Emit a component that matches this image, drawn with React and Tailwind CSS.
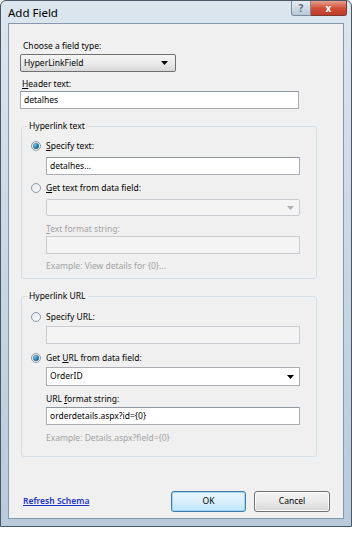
import React from "react";

const font = { fontFamily: '"Noto Sans", "Open Sans", sans-serif' };

function Arrow({ color = "#000" }) {
  return (
    <svg width="7" height="4" viewBox="0 0 7 4">
      <path d="M0 0 H7 L3.5 4 Z" fill={color} />
    </svg>
  );
}

function Radio({ checked }) {
  return (
    <span className="relative inline-flex h-[10px] w-[10px] items-center justify-center rounded-full border border-[#8c9aa8] bg-gradient-to-br from-[#e6e9ec] to-[#f8f9fa]">
      {checked && (
        <span className="h-[6px] w-[6px] rounded-full bg-[radial-gradient(circle_at_35%_35%,#7cc4ea,#1a6a9a_60%,#0d4468)]" />
      )}
    </span>
  );
}

function TextBox({ value, disabled, className = "" }) {
  return (
    <div
      className={
        "flex h-[18px] items-center px-[3px] text-[8.5px] " +
        (disabled
          ? "border border-[#c8ccd0] bg-[#f4f4f4] "
          : "border border-[#abadb3] border-t-[#8e959c] bg-white text-black ") +
        className
      }
    >
      {value}
    </div>
  );
}

function Label({ children, disabled, className = "" }) {
  return (
    <div
      className={
        "flex h-[14px] items-center text-[8.5px] leading-none " +
        (disabled ? "text-[#a3a3a3] " : "text-black ") +
        className
      }
    >
      {children}
    </div>
  );
}

export default function App() {
  return (
    <div className="h-[533px] w-[356px] overflow-hidden bg-white" style={font}>
      <div className="flex h-[527px] w-[352px] flex-col rounded-t-[6px] border border-[#4a5866] bg-gradient-to-b from-[#dce6ef] via-[#c9d7e4] to-[#b9cadb]">
        {/* title bar */}
        <div className="flex h-[22px] items-start justify-between">
          <div className="ml-[7px] mt-[6px] text-[11.5px] leading-none text-black">Add Field</div>
          <div className="mr-[4px] flex">
            <div className="flex h-[15px] w-[20px] items-center justify-center rounded-bl-[3px] border border-t-0 border-[#7a8a9a] bg-gradient-to-b from-[#e4ecf3] to-[#b8c8d8] text-[10px] font-bold leading-none text-[#5a6a7a]">
              ?
            </div>
            <div className="flex h-[15px] w-[36px] items-center justify-center rounded-br-[3px] border border-l-0 border-t-0 border-[#7a3a30] bg-gradient-to-b from-[#e8a090] via-[#d0503a] to-[#c03a28] text-[10px] font-bold leading-none text-white">
              x
            </div>
          </div>
        </div>
        {/* client area */}
        <div className="mx-[7px] flex flex-1 flex-col border border-[#8597ab] bg-[#f0f0f0] pl-[11px] pt-[15px]">
          <Label className="ml-[3px]">Choose a field type:</Label>
          <div className="mt-[1px] flex h-[18px] w-[156px] items-center justify-between rounded-[2px] border border-[#707070] bg-gradient-to-b from-[#f4f4f4] via-[#ebebeb] to-[#d8d8d8] px-[3px] text-[8.5px]">
            <span>HyperLinkField</span>
            <span className="mr-[4px]"><Arrow /></span>
          </div>
          <Label className="ml-[2px] mt-[5px]">
            <span><span className="underline">H</span>eader text:</span>
          </Label>
          <TextBox value="detalhes" className="w-[279px]" />

          {/* Hyperlink text group */}
          <fieldset className="ml-[1px] mt-[10px] h-[160px] w-[296px] rounded-[3px] border border-[#d5dfe5] pl-[9px]">
            <legend className="-ml-[4px] px-[2px] text-[8.5px] leading-[14px]">Hyperlink text</legend>
            <div className="flex flex-col">
              <div className="mt-[6px] flex items-center gap-[5px]">
                <Radio checked />
                <Label><span><span className="underline">S</span>pecify text:</span></Label>
              </div>
              <TextBox value="detalhes..." className="ml-[15px] mt-[4px] w-[254px]" />
              <div className="mt-[6px] flex items-center gap-[5px]">
                <Radio />
                <Label><span><span className="underline">G</span>et text from data field:</span></Label>
              </div>
              <div className="ml-[15px] mt-[4px] flex h-[17px] w-[254px] items-center justify-end rounded-[2px] border border-[#c8ccd0] bg-[#f4f4f4] pr-[5px]">
                <Arrow color="#b0b0b0" />
              </div>
              <Label disabled className="ml-[15px] mt-[6px]">
                <span><span className="underline">T</span>ext format string:</span>
              </Label>
              <TextBox disabled value="" className="ml-[15px] w-[254px]" />
              <Label disabled className="ml-[15px] mt-[5px]">Example: View details for {"{0}"}...</Label>
            </div>
          </fieldset>

          {/* Hyperlink URL group */}
          <fieldset className="ml-[1px] mt-[10px] h-[168px] w-[296px] rounded-[3px] border border-[#d5dfe5] pl-[9px]">
            <legend className="-ml-[4px] px-[2px] text-[8.5px] leading-[14px]">Hyperlink URL</legend>
            <div className="flex flex-col">
              <div className="mt-[7px] flex items-center gap-[5px]">
                <Radio />
                <Label>Specify URL:</Label>
              </div>
              <TextBox disabled value="" className="ml-[15px] mt-[2px] w-[254px]" />
              <div className="mt-[7px] flex items-center gap-[5px]">
                <Radio checked />
                <Label><span>Get <span className="underline">U</span>RL from data field:</span></Label>
              </div>
              <div className="ml-[15px] mt-[2px] flex h-[19px] w-[254px] items-center justify-between border border-[#abadb3] bg-white px-[3px] text-[8.5px]">
                <span>OrderID</span>
                <span className="mr-[2px]"><Arrow /></span>
              </div>
              <Label className="ml-[15px] mt-[6px]">
                <span>URL <span className="underline">f</span>ormat string:</span>
              </Label>
              <TextBox value="orderdetails.aspx?id={0}" className="ml-[15px] mt-[1px] w-[254px]" />
              <Label disabled className="ml-[15px] mt-[6px]">Example: Details.aspx?field={"{0}"}</Label>
            </div>
          </fieldset>

          {/* bottom row */}
          <div className="mt-[34px] flex items-center">
            <a className="ml-[3px] text-[8.5px] font-semibold text-[#1f35c8] underline">Refresh Schema</a>
            <div className="ml-auto mr-[13px] flex gap-[8px]">
              <div className="flex h-[21px] w-[75px] items-center justify-center rounded-[3px] border border-[#3d7bad] bg-gradient-to-b from-[#eaf6fd] via-[#d9f0fc] to-[#bee6fd] text-[8.5px] shadow-[inset_0_0_0_1px_#a6d8f4]">
                OK
              </div>
              <div className="flex h-[21px] w-[76px] items-center justify-center rounded-[3px] border border-[#707070] bg-gradient-to-b from-[#f2f2f2] via-[#ebebeb] to-[#d6d6d6] text-[8.5px] shadow-[inset_0_0_0_1px_#fcfcfc]">
                Cancel
              </div>
            </div>
          </div>
        </div>
        <div className="h-[7px]" />
      </div>
    </div>
  );
}
